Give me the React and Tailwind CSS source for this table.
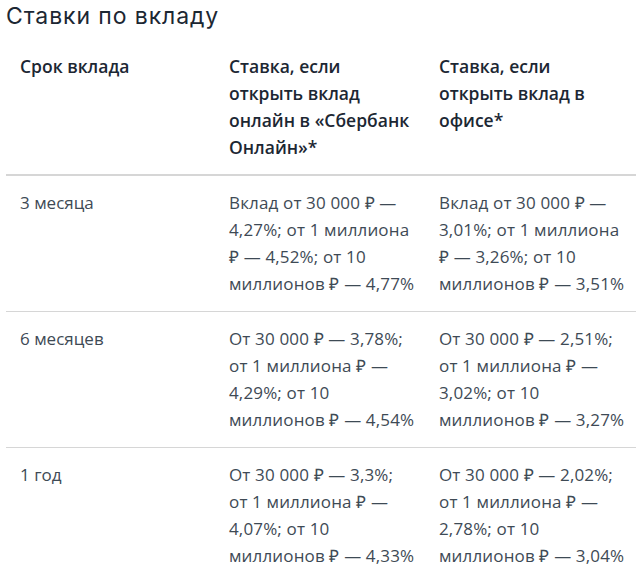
import React from 'react';

// Lines are split the way the source table wraps them
const rows = [
  {
    term: '3 месяца',
    online: ['Вклад от 30 000 ₽ —', '4,27%; от 1 миллиона', '₽ — 4,52%; от 10', 'миллионов ₽ — 4,77%'],
    office: ['Вклад от 30 000 ₽ —', '3,01%; от 1 миллиона', '₽ — 3,26%; от 10', 'миллионов ₽ — 3,51%'],
  },
  {
    term: '6 месяцев',
    online: ['От 30 000 ₽ — 3,78%;', 'от 1 миллиона ₽ —', '4,29%; от 10', 'миллионов ₽ — 4,54%'],
    office: ['От 30 000 ₽ — 2,51%;', 'от 1 миллиона ₽ —', '3,02%; от 10', 'миллионов ₽ — 3,27%'],
  },
  {
    term: '1 год',
    online: ['От 30 000 ₽ — 3,3%;', 'от 1 миллиона ₽ —', '4,07%; от 10', 'миллионов ₽ — 4,33%'],
    office: ['От 30 000 ₽ — 2,02%;', 'от 1 миллиона ₽ —', '2,78%; от 10', 'миллионов ₽ — 3,04%'],
  },
];

const Lines = ({ lines }) => (
  <>
    {lines.map((l, i) => (
      <span key={i} className="block whitespace-nowrap">{l}</span>
    ))}
  </>
);

const App = () => {
  return (
    <div className="w-[641px] h-[572px] overflow-hidden bg-white font-['Open_Sans',sans-serif]">
      <h2 className="pl-[6px] h-[40px] font-['Inter',sans-serif] text-[23px] leading-[32px] tracking-[0.9px] text-[#1c2733] font-normal">
        Ставки по вкладу
      </h2>
      <table className="ml-[6px] w-[630px] border-collapse table-fixed">
        <thead>
          <tr className="border-b-2 border-[#d6d6d6]">
            <th className="w-[210px] align-top text-left pl-[14px] pr-[10px] pt-[13px] pb-[13px] text-[17.5px] leading-[27px] font-semibold text-[#1c2733]">
              Срок вклада
            </th>
            <th className="w-[210px] align-top text-left pl-[13px] pr-[8px] pt-[13px] pb-[13px] text-[17.5px] leading-[27px] font-semibold text-[#1c2733]">
              Ставка, если открыть вклад онлайн в «Сбербанк Онлайн»*
            </th>
            <th className="w-[210px] align-top text-left pl-[13px] pr-[8px] pt-[13px] pb-[13px] text-[17.5px] leading-[27px] font-semibold text-[#1c2733]">
              Ставка, если открыть вклад в офисе*
            </th>
          </tr>
        </thead>
        <tbody>
          {rows.map((r, i) => (
            <tr key={i} className={i < rows.length - 1 ? 'border-b border-[#d6d6d6]' : ''}>
              <td className="align-top pl-[14px] pr-[10px] pt-[13px] pb-[14px] text-[17px] leading-[27px] text-[#3e4a55]">
                {r.term}
              </td>
              <td className="align-top pl-[13px] pr-[4px] pt-[13px] pb-[14px] text-[17px] leading-[27px] tracking-[0.15px] text-[#3e4a55]">
                <Lines lines={r.online} />
              </td>
              <td className="align-top pl-[13px] pr-[4px] pt-[13px] pb-[14px] text-[17px] leading-[27px] tracking-[0.15px] text-[#3e4a55]">
                <Lines lines={r.office} />
              </td>
            </tr>
          ))}
        </tbody>
      </table>
    </div>
  );
};

export default App;
